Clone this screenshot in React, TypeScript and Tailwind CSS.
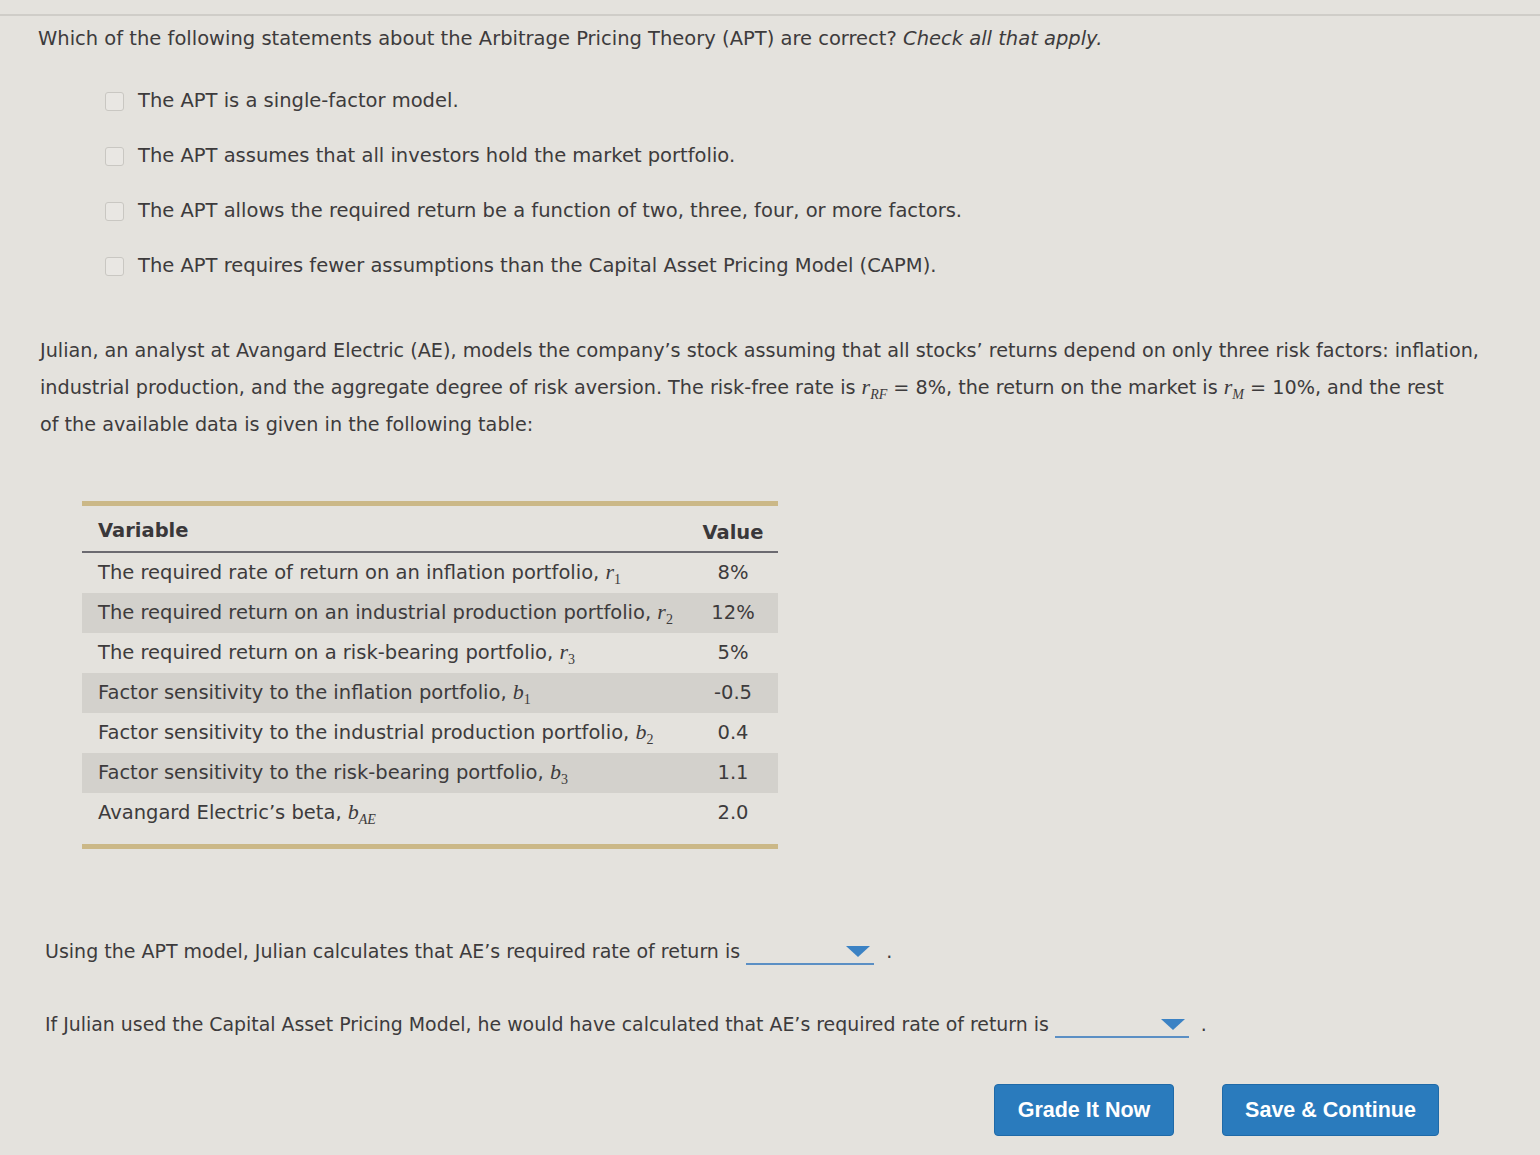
import React from "react";

const font = { fontFamily: '"DejaVu Sans", Verdana, sans-serif' };

function V({ v, sub, italicSub }: { v: string; sub: string; italicSub?: boolean }) {
  return (
    <span className="font-['Liberation_Serif',serif] text-[22px] leading-none whitespace-nowrap">
      <span className="italic">{v}</span>
      <span className={`relative top-[5px] text-[14px] ${italicSub ? "italic" : ""}`}>{sub}</span>
    </span>
  );
}

function Checkbox() {
  return <span className="inline-block w-[19px] h-[19px] rounded-[3px] border border-[#c9c7c2] bg-[#e9e7e3] shrink-0" />;
}

function Dropdown({ w }: { w: string }) {
  return (
    <span className={`inline-flex items-end justify-end ${w} h-[28px] border-b-2 border-[#5b8fc4] pr-[4px] pb-[6px]`}>
      <svg width="24" height="11" viewBox="0 0 24 11">
        <polygon points="0,0 24,0 12,11" fill="#3b82c4" />
      </svg>
    </span>
  );
}

const rows: { label: React.ReactNode; value: string; shade: boolean }[] = [
  { label: <>The required rate of return on an inflation portfolio, <V v="r" sub="1" /></>, value: "8%", shade: false },
  { label: <>The required return on an industrial production portfolio, <V v="r" sub="2" /></>, value: "12%", shade: true },
  { label: <>The required return on a risk-bearing portfolio, <V v="r" sub="3" /></>, value: "5%", shade: false },
  { label: <>Factor sensitivity to the inflation portfolio, <V v="b" sub="1" /></>, value: "-0.5", shade: true },
  { label: <>Factor sensitivity to the industrial production portfolio, <V v="b" sub="2" /></>, value: "0.4", shade: false },
  { label: <>Factor sensitivity to the risk-bearing portfolio, <V v="b" sub="3" /></>, value: "1.1", shade: true },
  { label: <>Avangard Electric’s beta, <V v="b" sub="AE" italicSub /></>, value: "2.0", shade: false },
];

export default function App() {
  return (
    <div className="w-[1540px] h-[1155px] bg-[#e4e2dd] text-[#3d3b3c] overflow-hidden" style={font}>
      <div className="border-t-2 border-[#cfcdc8] mt-[14px]" />
      <div className="pl-[38px] pt-[6px] text-[19.5px]">
        <p className="leading-[34px] whitespace-nowrap">
          Which of the following statements about the Arbitrage Pricing Theory (APT) are correct? <i>Check all that apply.</i>
        </p>
        <div className="pl-[67px] mt-[32px] flex flex-col gap-[29px]">
          {[
            "The APT is a single-factor model.",
            "The APT assumes that all investors hold the market portfolio.",
            "The APT allows the required return be a function of two, three, four, or more factors.",
            "The APT requires fewer assumptions than the Capital Asset Pricing Model (CAPM).",
          ].map((t) => (
            <label key={t} className="flex items-center gap-[14px] h-[26px]">
              <Checkbox />
              <span>{t}</span>
            </label>
          ))}
        </div>
        <p className="mt-[53px] pl-[2px] leading-[37px] whitespace-nowrap text-[19.2px]">
          Julian, an analyst at Avangard Electric (AE), models the company’s stock assuming that all stocks’ returns depend on only three risk factors: inflation,
          <br />
          industrial production, and the aggregate degree of risk aversion. The risk-free rate is <V v="r" sub="RF" italicSub /> = 8%, the return on the market is <V v="r" sub="M" italicSub /> = 10%, and the rest
          <br />
          of the available data is given in the following table:
        </p>

        <div className="ml-[44px] mt-[58px] w-[696px]">
          <div className="h-[5px] bg-[#cbb887]" />
          <div className="flex items-end h-[47px] border-b-2 border-[#6b6a70] font-bold text-[#3a383a]">
            <div className="flex-1 pl-[16px] pb-[6px]">Variable</div>
            <div className="w-[90px] text-center pb-[4px]">Value</div>
          </div>
          {rows.map((r, i) => (
            <div key={i} className={`flex items-center h-[40px] ${r.shade ? "bg-[#d3d1cc]" : ""}`}>
              <div className="flex-1 pl-[16px] whitespace-nowrap">{r.label}</div>
              <div className="w-[90px] text-center">{r.value}</div>
            </div>
          ))}
          <div className="h-[11px]" />
          <div className="h-[5px] bg-[#cbb887]" />
        </div>

        <p className="mt-[88px] pl-[7px] flex items-center whitespace-nowrap text-[19px]">
          <span>Using the APT model, Julian calculates that AE’s required rate of return is</span>
          <span className="ml-[6px] flex"><Dropdown w="w-[128px]" /></span>
          <span className="ml-[12px]">.</span>
        </p>
        <p className="mt-[44px] pl-[7px] flex items-center whitespace-nowrap text-[18.9px]">
          <span>If Julian used the Capital Asset Pricing Model, he would have calculated that AE’s required rate of return is</span>
          <span className="ml-[6px] flex"><Dropdown w="w-[134px]" /></span>
          <span className="ml-[12px]">.</span>
        </p>

        <div className="flex justify-end gap-[48px] mt-[46px] pr-[101px]">
          <button className="w-[180px] h-[52px] rounded-[4px] bg-[#2a7bbd] border border-[#1f6aa8] text-white font-bold text-[21.5px] font-['Liberation_Sans',Arial,sans-serif]">
            Grade It Now
          </button>
          <button className="w-[217px] h-[52px] rounded-[4px] bg-[#2a7bbd] border border-[#1f6aa8] text-white font-bold text-[21.5px] font-['Liberation_Sans',Arial,sans-serif]">
            Save &amp; Continue
          </button>
        </div>
      </div>
    </div>
  );
}
